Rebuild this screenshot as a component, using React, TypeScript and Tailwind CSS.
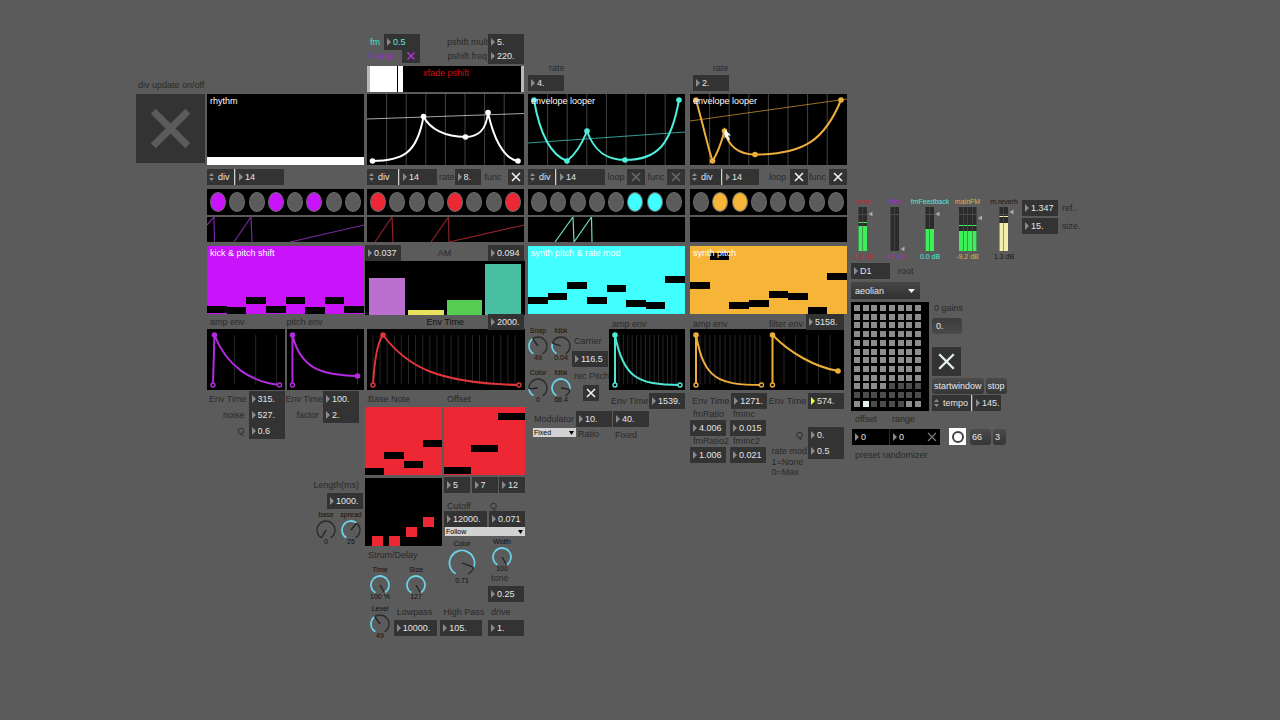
import type { ReactNode } from "react";

function Label({ children, htmlFor, className = "" }: { children: ReactNode; htmlFor?: string; className?: string }) {
  return (
    <label htmlFor={htmlFor} className={`block shrink-0 whitespace-nowrap leading-[10px] ${className}`}>
      {children}
    </label>
  );
}

type NumProps = { id: string; name: string; value: string; className?: string; text?: string; bg?: string; arrow?: string };

function Num({ id, name, value, className = "w-9", text = "text-[#e4e4e4]", bg = "bg-[#333333]", arrow = "#8a8a8a" }: NumProps) {
  return (
    <span className={`flex h-4 shrink-0 items-center gap-[2px] pl-[3px] ${bg} ${className}`}>
      <svg className="h-2 w-1 shrink-0" viewBox="0 0 4 8">
        <path d="M0 0L4 4L0 8Z" fill={arrow} />
      </svg>
      <input id={id} aria-label={name} defaultValue={value} className={`w-full min-w-0 bg-transparent outline-none ${text}`} />
    </span>
  );
}

type ToggleProps = { id: string; name: string; on?: boolean; className?: string; color?: string; bg?: string; stroke?: number };

function Toggle({ id, name, on = true, className = "size-4", color = "#f0f0f0", bg = "bg-[#333333]", stroke = 1.6 }: ToggleProps) {
  return (
    <span className={`grid shrink-0 ${bg} ${className}`}>
      <input id={id} type="checkbox" aria-label={name} defaultChecked={on} className="col-start-1 row-start-1 size-full appearance-none" />
      <svg className="pointer-events-none col-start-1 row-start-1 size-full" viewBox="0 0 16 16">
        <path d="M4 4L12 12M12 4L4 12" stroke={color} strokeWidth={stroke} />
      </svg>
    </span>
  );
}

function Attr({ id, name = "div", value, width = "w-[27px]", numWidth = "w-12" }: { id: string; name?: string; value: string; width?: string; numWidth?: string }) {
  return (
    <div className="flex h-4 shrink-0">
      <button className={`flex items-center gap-1 bg-[#333333] pl-[2px] text-[#e4e4e4] ${width}`}>
        <svg className="h-[10px] w-[5px]" viewBox="0 0 5 10">
          <path d="M0 4L2.5 1L5 4ZM0 6L2.5 9L5 6Z" fill="#8a8a8a" />
        </svg>
        {name}
      </button>
      <span className="mr-px w-px bg-[#d0d0d0]" />
      <Num id={id} name={`${name} value`} value={value} className={numWidth} />
    </div>
  );
}

function Gates({ name, on, fill }: { name: string; on: number[]; fill: string }) {
  return (
    <div className="mt-1 flex h-[26px] items-center justify-between bg-black px-[3px]">
      {Array.from({ length: 8 }, (_, i) => (
        <input
          key={i}
          type="checkbox"
          aria-label={`${name} step ${i + 1}`}
          defaultChecked={on.includes(i)}
          className={`h-5 w-4 appearance-none rounded-[50%] border border-[#6b6b6b] bg-[#5b5b5b] ${fill}`}
        />
      ))}
    </div>
  );
}

function Phase({ d, color }: { d?: string; color?: string }) {
  return (
    <svg className="mt-[2px] block h-[25px] w-full bg-black" viewBox="0 0 157 25" preserveAspectRatio="none">
      {d && <path d={d} fill="none" stroke={color} strokeWidth="1.2" />}
    </svg>
  );
}

// `steps` holds the distance of every bar from the top of the panel
function Steps({ steps, className, title }: { steps: number[]; className: string; title?: string }) {
  return (
    <div className={`relative flex h-[68px] overflow-hidden ${className}`}>
      {steps.map((top, i) => (
        <div key={i} className="h-[7px] flex-1 bg-black" style={{ marginTop: top }} />
      ))}
      {title && <span className="absolute left-[3px] top-[2px] leading-[10px] text-white">{title}</span>}
    </div>
  );
}

type Point = [number, number];

type CurveProps = { width?: number; height?: number; d: string; color: string; dots: Point[]; rings?: Point[]; grid: number[]; line?: string; children?: ReactNode };

function Curve({ width = 157, height = 71, d, color, dots, rings = [], grid, line, children }: CurveProps) {
  const inset = height === 71 ? 0 : 6;
  return (
    <svg className={`block w-full bg-black ${height === 71 ? "h-[71px]" : "h-[61px]"}`} viewBox={`0 0 ${width} ${height}`} preserveAspectRatio="none">
      {grid.map((x) => (
        <path key={x} d={`M${x} ${inset}V${height - inset}`} stroke={inset ? "#262626" : "#444444"} />
      ))}
      {line && <path d={line} stroke={color} strokeOpacity="0.65" />}
      <path d={d} fill="none" stroke={color} strokeWidth="2" />
      {dots.map(([x, y]) => (
        <circle key={`${x}-${y}`} cx={x} cy={y} r="2.8" fill={color} />
      ))}
      {rings.map(([x, y]) => (
        <circle key={`${x}-${y}`} cx={x} cy={y} r="2" fill="black" stroke={color} strokeWidth="1.4" />
      ))}
      {children}
    </svg>
  );
}

const eighths = [19.6, 39.2, 58.8, 78.4, 98, 117.6, 137.2];
const range = (start: number, step: number, count: number) => Array.from({ length: count }, (_, i) => start + step * i);

function polar(c: number, r: number, deg: number) {
  const a = (deg * Math.PI) / 180;
  return `${c + r * Math.sin(a)} ${c - r * Math.cos(a)}`;
}

function Knob({ label, value, frac, big = false }: { label: string; value: string; frac: number; big?: boolean }) {
  const c = big ? 14 : 10;
  const r = big ? 12.5 : 9;
  const end = -150 + 300 * frac;
  return (
    <div className={`flex flex-col items-center text-[7px] text-[#111111] ${big ? "w-7" : "w-5"}`}>
      <span className="h-[9px] whitespace-nowrap leading-[8px]">{label}</span>
      <svg className={big ? "size-7" : "size-5"} viewBox={`0 0 ${c * 2} ${c * 2}`} role="img" aria-label={`${label} ${value}`}>
        <path d={`M${polar(c, r, -150)}A${r} ${r} 0 1 1 ${polar(c, r, 150)}`} fill="none" stroke="#2b2b2b" strokeWidth="1.3" />
        {frac > 0 && (
          <path d={`M${polar(c, r, -150)}A${r} ${r} 0 ${frac > 0.6 ? 1 : 0} 1 ${polar(c, r, end)}`} fill="none" stroke="#6fd3e6" strokeWidth="1.8" />
        )}
        <path d={`M${c} ${c}L${polar(c, r, end)}`} stroke="#222222" strokeWidth="1.3" />
      </svg>
      <span className={`h-2 whitespace-nowrap leading-[8px] ${big ? "" : "-mt-[2px]"}`}>{value}</span>
    </div>
  );
}

function Drop({ name, value, className }: { name: string; value: string; className: string }) {
  return (
    <span className={`grid h-[9px] shrink-0 items-center bg-[#d2d2d2] ${className}`}>
      <select aria-label={name} className="col-start-1 row-start-1 h-[9px] w-full appearance-none pl-px text-[7px] leading-[9px] text-black">
        <option>{value}</option>
      </select>
      <svg className="pointer-events-none col-start-1 row-start-1 mr-[2px] h-1 w-[5px] justify-self-end" viewBox="0 0 5 4">
        <path d="M0 0H5L2.5 4Z" fill="black" />
      </svg>
    </span>
  );
}

type MeterProps = { label: string; value: string; color: string; width: string; bars?: number; level: number; peak?: number; fader: number; fill?: string };

function Meter({ label, value, color, width, bars = 2, level, peak, fader, fill = "#3df05a" }: MeterProps) {
  const half = (bars * 9) / 4;
  return (
    <div className={`flex flex-col items-center text-[7px] ${width} ${color}`}>
      <span className="whitespace-nowrap leading-[8px]">{label}</span>
      <svg className="mt-px h-11 w-9" viewBox="0 0 36 44">
        {Array.from({ length: bars }, (_, i) => {
          const x = 18 - half + i * 4.5;
          return (
            <g key={i}>
              <rect x={x} width="4" height="44" fill="#2b2b2b" />
              <rect x={x} y="7" width="4" height="1" fill="#4c4c4c" />
              <rect x={x} y={44 - level} width="4" height={level} fill={fill} />
              {peak !== undefined && <rect x={x} y={peak} width="4" height="1" fill={fill} />}
            </g>
          );
        })}
        <path d={`M${19 + half} ${fader}L${23 + half} ${fader - 2.5}V${fader + 2.5}Z`} fill="#aaaaaa" />
      </svg>
      <span className="mt-[2px] whitespace-nowrap leading-[8px]">{value}</span>
    </div>
  );
}

function Rhythm() {
  return (
    <div className="min-w-0 grow-[157] basis-0 ml-[2px] pt-[94px]">
      <div className="flex h-[71px] flex-col justify-between bg-black">
        <span className="pl-[3px] pt-[2px] leading-[10px] text-white">rhythm</span>
        <div className="h-2 bg-white" />
      </div>
      <div className="mt-1">
        <Attr id="rhythm-div" value="14" />
      </div>
      <Gates name="rhythm" on={[0, 3, 5]} fill="checked:bg-[#c913fb]" />
      <Phase color="#75299b" d="M0 8L7 0L7.5 25M27 25L44 0L45 25M83 25L157 8" />
      <Steps className="mt-1 bg-[#c913fb]" title="kick & pitch shift" steps={[60, 61, 51, 60, 51, 61, 51, 60]} />
      <div className="grid h-[15px] grid-cols-2 items-center gap-[2px]">
        <Label className="pl-[3px]">amp env</Label>
        <Label>pitch env</Label>
      </div>
      <div className="grid grid-cols-2 gap-[2px]">
        <Curve width={78} height={61} color="#b42be0" grid={[27.5, 49, 70]} dots={[[7.5, 6]]} rings={[[6, 56], [73, 56]]} d="M6 56L7.5 6C20 38 45 53 73 56" />
        <Curve width={78} height={61} color="#b42be0" grid={[71]} dots={[[5.5, 6], [71, 47]]} rings={[[5.5, 56]]} d="M5.5 56V6C14 42 38 46 71 47" />
      </div>
      <div className="mt-px flex gap-px">
        <div className="flex flex-col items-end">
          <div className="flex items-center gap-[2px] pl-[2px]">
            <Label htmlFor="kick-time">Env Time</Label>
            <Num id="kick-time" name="kick env time" value="315." />
          </div>
          <div className="flex items-center gap-1">
            <Label htmlFor="noise">noise</Label>
            <Num id="noise" name="noise" value="527." />
          </div>
          <div className="flex items-center gap-1">
            <Label htmlFor="kick-q">Q</Label>
            <Num id="kick-q" name="kick Q" value="0.6" />
          </div>
        </div>
        <div className="flex flex-col items-end">
          <div className="flex items-center">
            <Label htmlFor="pitch-time">Env Time</Label>
            <Num id="pitch-time" name="pitch env time" value="100." />
          </div>
          <div className="flex items-center gap-1">
            <Label htmlFor="factor">factor</Label>
            <Num id="factor" name="factor" value="2." />
          </div>
        </div>
      </div>
      <div className="mt-[41px] flex flex-col items-end pr-px">
        <Label htmlFor="length" className="pr-1">Length(ms)</Label>
        <div className="mt-[3px]">
          <Num id="length" name="length in ms" value="1000." />
        </div>
        <div className="mt-[2px] flex gap-[5px] pr-[2px]">
          <Knob label="base" value="0" frac={0} />
          <Knob label="spread" value="25" frac={0.63} />
        </div>
      </div>
    </div>
  );
}

function Strum() {
  return (
    <div className="min-w-0 grow-[160] basis-0 ml-px pt-[34px]">
      <div className="pl-[2px] pr-px">
        <div className="flex justify-between">
          <div className="flex w-[53px] flex-col pl-[3px]">
            <div className="flex h-[15px] items-center justify-between">
              <Label htmlFor="fm" className="text-[#45e0d0]">fm</Label>
              <Num id="fm" name="fm" value="0.5" text="text-[#5fe3d8]" />
            </div>
            <div className="flex h-[14px] items-center justify-between">
              <Label htmlFor="k-amp" className="text-[#9a2fc0]">k amp</Label>
              <Toggle id="k-amp" name="k amp" color="#c02fe8" className="h-[14px] w-[18px]" />
            </div>
          </div>
          <div className="flex flex-col items-end">
            <div className="flex h-[15px] items-center">
              <Label htmlFor="mult">pshift mult</Label>
              <Num id="mult" name="pshift mult" value="5." />
            </div>
            <div className="flex h-[14px] items-center gap-px">
              <Label htmlFor="freq">pshift freq</Label>
              <Num id="freq" name="pshift freq" value="220." />
            </div>
          </div>
        </div>
        <div className="mt-[3px] flex h-[26px] bg-black">
          <div className="w-[3px] bg-[#b9b9b9]" />
          <div className="w-[27px] bg-white" />
          <div className="ml-px w-[5px] bg-white" />
          <span className="ml-5 mt-[2px] flex-1 leading-[10px] text-[#d80c0c]">xfade pshift</span>
          <div className="w-[3px] bg-[#b9b9b9]" />
        </div>
        <div className="mt-[2px]">
          <Curve
            color="#ffffff"
            grid={eighths}
            line="M0 25L157 19.5"
            dots={[[5.5, 67], [56.5, 22.5], [98.5, 43], [121, 18.5], [151, 67]]}
            d="M5.5 67C35 67 50 60 56.5 22.5C63 35 78 43 98.5 43C110 43 119 38 121 18.5C126 42 136 65 151 67"
          />
        </div>
        <div className="mt-1 flex items-center">
          <Attr id="am-div" value="14" width="w-[31px]" numWidth="w-[37px]" />
          <Label htmlFor="am-rate" className="ml-[2px]">rate</Label>
          <Num id="am-rate" name="rate" value="8." className="w-[26px]" />
          <Label htmlFor="am-func" className="ml-[4px]">func</Label>
          <span className="ml-auto">
            <Toggle id="am-func" name="func" />
          </span>
        </div>
        <Gates name="am" on={[0, 4, 7]} fill="checked:bg-[#ed2734]" />
        <Phase color="#8e2226" d="M8 25L25 0L26 25M64 25L81.5 0L82 25L157 8" />
      </div>
      <div className="mt-[3px] flex items-center justify-between pr-px">
        <Num id="am-low" name="AM low" value="0.037" />
        <Label htmlFor="am-high">AM</Label>
        <Num id="am-high" name="AM high" value="0.094" />
      </div>
      <div className="grid h-[54px] grid-cols-4 items-end gap-[3px] bg-black px-1">
        <div className="h-[37px] bg-[#bb70d0]" />
        <div className="h-[5px] bg-[#e6e45c]" />
        <div className="h-[15px] bg-[#56cc50]" />
        <div className="h-[51px] bg-[#48bfa2]" />
      </div>
      <div className="flex h-[14px] items-center justify-end gap-6 pr-px">
        <Label htmlFor="am-time" className="text-[#111111]">Env Time</Label>
        <Num id="am-time" name="env time" value="2000." />
      </div>
      <div className="pl-[2px]">
        <Curve width={158} height={61} color="#e0353a" grid={range(6, 7.1, 21)} dots={[[16, 6]]} rings={[[6, 56], [152, 56]]} d="M6 56C7 38 10 14 16 6C40 38 70 54 152 56" />
      </div>
      <div className="flex">
        <div className="grow-[77] basis-0">
          <div className="flex h-[17px] items-center">
            <Label className="pl-[3px]">Base Note</Label>
          </div>
          <Steps className="bg-[#ed2734]" steps={[61, 45, 54, 33]} />
          <div className="mt-[3px] flex h-[68px] gap-[6px] bg-black pl-[7px]">
            {[58, 58, 49, 39].map((top, i) => (
              <div key={i} className="h-[10px] w-[11px] bg-[#ed2734]" style={{ marginTop: top }} />
            ))}
          </div>
          <div className="flex h-[18px] items-center pl-[3px]">
            <Label>Strum/Delay</Label>
          </div>
          <div className="mt-[2px] flex gap-4 pl-[5px]">
            <Knob label="Time" value="100 %" frac={1} />
            <Knob label="Size" value="127" frac={1} />
          </div>
        </div>
        <div className="ml-[2px] grow-[81] basis-0">
          <div className="flex h-[17px] items-center">
            <Label className="pl-[3px]">Offset</Label>
          </div>
          <Steps className="bg-[#ed2734]" steps={[60, 38, 6]} />
          <div className="mt-[2px] flex justify-between">
            <Num id="off-1" name="offset 1" value="5" className="w-[26px]" />
            <Num id="off-2" name="offset 2" value="7" className="w-[26px]" />
            <Num id="off-3" name="offset 3" value="12" className="w-[26px]" />
          </div>
          <div className="mt-2 flex pl-[3px]">
            <Label htmlFor="cutoff" className="w-[43px]">Cutoff</Label>
            <Label htmlFor="cut-q">Q</Label>
          </div>
          <div className="flex justify-between">
            <Num id="cutoff" name="cutoff" value="12000." className="w-[43px]" />
            <Num id="cut-q" name="Q" value="0.071" />
          </div>
          <Drop name="follow mode" value="Follow" className="ml-px" />
          <div className="mt-[2px] flex items-start gap-4 pl-1">
            <div className="pt-[2px]">
              <Knob label="Color" value="0.71" frac={0.87} big />
            </div>
            <Knob label="Width" value="100" frac={1} />
          </div>
        </div>
      </div>
      <div className="-mt-7 flex justify-between pr-px">
        <div className="pl-[5px] pt-8">
          <Knob label="Level" value="49" frac={0.38} />
        </div>
        <div className="pt-[34px]">
          <Label htmlFor="lowpass" className="pb-[3px] pl-[3px]">Lowpass</Label>
          <Num id="lowpass" name="lowpass" value="10000." className="w-[43px]" />
        </div>
        <div className="pt-[34px]">
          <Label htmlFor="highpass" className="pb-[3px] pl-[3px]">High Pass</Label>
          <Num id="highpass" name="high pass" value="105." className="w-[42px]" />
        </div>
        <div>
          <Label htmlFor="tone" className="pb-[3px] pl-[3px]">tone</Label>
          <Num id="tone" name="tone" value="0.25" />
          <Label htmlFor="drive" className="pb-[3px] pl-[3px] pt-[5px]">drive</Label>
          <Num id="drive" name="drive" value="1." />
        </div>
      </div>
    </div>
  );
}

function SynthOne() {
  return (
    <div className="min-w-0 grow-[157] basis-0 ml-[3px] pt-[60px]">
      <div className="flex h-[15px] items-center pl-[21px]">
        <Label htmlFor="rate-1">rate</Label>
      </div>
      <Num id="rate-1" name="rate" value="4." />
      <div className="relative mt-[3px]">
        <Curve
          color="#4feedd"
          grid={eighths}
          line="M0 49L157 38"
          dots={[[6, 6], [39, 67], [59, 37], [97, 66], [151, 6]]}
          d="M6 6C11 35 20 60 39 67C48 60 54 50 59 37C66 57 78 66 97 66C130 66 143 50 151 6"
        />
        <span className="absolute left-[3px] top-[2px] leading-[10px] text-white">envelope looper</span>
      </div>
      <div className="mt-1 flex items-center justify-between">
        <Attr id="s1-div" value="14" />
        <Label htmlFor="s1-loop">loop</Label>
        <Toggle id="s1-loop" name="loop" on={false} color="#6a6a6a" className="h-4 w-[18px]" />
        <Label htmlFor="s1-func">func</Label>
        <Toggle id="s1-func" name="func" on={false} color="#6a6a6a" className="h-4 w-[18px]" />
      </div>
      <Gates name="synth one" on={[5, 6]} fill="checked:bg-[#41ffff]" />
      <Phase color="#6fdcb4" d="M27 25L45 0L46 25L63.5 0L64 25" />
      <Steps className="mt-1 bg-[#41ffff]" title="synth pitch & rate mod" steps={[51, 47, 36, 51, 39, 54, 56, 30]} />
      <div className="flex">
        <div className="grid grid-cols-2 content-start gap-x-[3px] gap-y-[7px] pt-[13px]">
          <Knob label="Snap" value="49" frac={0.38} />
          <Knob label="fdbk" value="0.04" frac={0.26} />
          <Knob label="Color" value="0" frac={0.18} />
          <Knob label="fdbk" value="68.4" frac={0.83} />
        </div>
        <div className="ml-px flex flex-col items-start pt-[22px]">
          <Label htmlFor="carrier" className="pb-[5px] pl-[2px]">Carrier</Label>
          <Num id="carrier" name="carrier" value="116.5" />
          <Label htmlFor="rec" className="pb-1 pl-[2px] pt-1">rec Pitch</Label>
          <span className="self-center">
            <Toggle id="rec" name="rec pitch" />
          </span>
        </div>
        <div className="min-w-0 flex-1">
          <div className="flex h-[15px] items-end pl-[3px]">
            <Label>amp env</Label>
          </div>
          <Curve width={76} height={61} color="#4fe6d4" grid={range(10, 4.4, 14)} dots={[[6, 6]]} rings={[[6, 56], [71, 56]]} d="M6 56V6C14 48 28 56 71 56" />
          <div className="mt-[3px] flex items-center justify-between pl-[2px]">
            <Label htmlFor="s1-time">Env Time</Label>
            <Num id="s1-time" name="env time" value="1539." />
          </div>
        </div>
      </div>
      <div className="mt-[2px] flex items-center gap-px pl-[6px]">
        <Label htmlFor="mod-ratio" className="w-[41px]">Modulator</Label>
        <Num id="mod-ratio" name="modulator ratio" value="10." />
        <Num id="mod-fixed" name="modulator fixed" value="40." />
      </div>
      <div className="mt-px flex items-start pl-[5px]">
        <Drop name="modulator mode" value="Fixed" className="w-[43px]" />
        <Label htmlFor="mod-ratio" className="w-[37px] pl-[2px] pt-px">Ratio</Label>
        <Label htmlFor="mod-fixed" className="pl-[2px] pt-[2px]">Fixed</Label>
      </div>
    </div>
  );
}

function SynthTwo() {
  return (
    <div className="min-w-0 grow-[157] basis-0 ml-[5px] pt-[60px]">
      <div className="flex h-[15px] items-center pl-[23px]">
        <Label htmlFor="rate-2">rate</Label>
      </div>
      <div className="pl-[3px]">
        <Num id="rate-2" name="rate" value="2." />
      </div>
      <div className="relative mt-[3px]">
        <Curve
          color="#edae3c"
          grid={eighths}
          line="M0 27L157 5"
          dots={[[6, 6], [22.5, 67], [34.5, 37], [65, 60.5], [151, 6]]}
          d="M6 6C13 30 17 50 22.5 67C27 60 31 50 34.5 37C39 54 50 60.5 65 60.5C115 60.5 135 45 151 6"
        >
          <path d="M34.5 35L41 41.5H38L40 45.5L38 46.5L36 42.5L34.5 45Z" fill="white" />
        </Curve>
        <span className="absolute left-[3px] top-[2px] leading-[10px] text-white">envelope looper</span>
      </div>
      <div className="mt-1 flex items-center">
        <Attr id="s2-div" value="14" width="w-[31px]" numWidth="w-9" />
        <Label htmlFor="s2-loop" className="ml-auto">loop</Label>
        <span className="ml-[4px]">
          <Toggle id="s2-loop" name="loop" className="h-4 w-[18px]" />
        </span>
        <Label htmlFor="s2-func" className="ml-px">func</Label>
        <span className="ml-[3px]">
          <Toggle id="s2-func" name="func" className="h-4 w-[18px]" />
        </span>
      </div>
      <Gates name="synth two" on={[1, 2]} fill="checked:bg-[#f7b538]" />
      <Phase />
      <Steps className="mt-1 bg-[#f7b538]" title="synth pitch" steps={[36, 7, 56, 54, 45, 47, 61, 27]} />
      <div className="pr-[3px]">
        <div className="flex h-[15px] items-center pl-[3px]">
          <Label className="w-[76px] pt-1">amp env</Label>
          <Label htmlFor="filter" className="pt-1">filter env</Label>
          <span className="ml-auto">
            <Num id="filter" name="filter env" value="5158." className="w-[38px]" />
          </span>
        </div>
        <Curve
          width={154}
          height={61}
          color="#edae3c"
          grid={[...range(10, 5, 13), ...range(94, 11.5, 5)]}
          dots={[[6, 6], [82.5, 6], [148, 42]]}
          rings={[[6, 56], [71.5, 56], [82.5, 56]]}
          d="M6 56V6C14 50 28 56 71.5 56M82.5 56V6C100 24 125 38 148 42"
        />
        <div className="mt-[3px] flex items-center justify-between pl-[2px]">
          <Label htmlFor="s2-time">Env Time</Label>
          <Num id="s2-time" name="amp env time" value="1271." />
          <Label htmlFor="s2-ftime">Env Time</Label>
          <Num id="s2-ftime" name="filter env time" value="574." arrow="#e8ff3c" />
        </div>
        <div className="flex justify-between">
          <div className="grid grid-cols-2 content-start gap-x-px">
            <Label htmlFor="ratio-1" className="pb-px pl-[3px]">fmRatio</Label>
            <Label htmlFor="inc-1" className="pb-px pl-[3px]">fmInc</Label>
            <Num id="ratio-1" name="fmRatio" value="4.006" />
            <Num id="inc-1" name="fmInc" value="0.015" />
            <Label htmlFor="ratio-2" className="pb-px pl-[3px]">fmRatio2</Label>
            <Label htmlFor="inc-2" className="pb-px pl-[3px]">fmInc2</Label>
            <Num id="ratio-2" name="fmRatio2" value="1.006" />
            <Num id="inc-2" name="fmInc2" value="0.021" />
          </div>
          <div className="pt-[18px]">
            <div className="flex items-center justify-end gap-[5px]">
              <Label htmlFor="s2-q">Q</Label>
              <Num id="s2-q" name="Q" value="0." />
            </div>
            <div className="flex items-center justify-end gap-px">
              <Label htmlFor="rate-mod">rate mod</Label>
              <Num id="rate-mod" name="rate mod" value="0.5" />
            </div>
            <p className="-mt-[2px] leading-[10px]">
              1=None
              <br />
              0=Max
            </p>
          </div>
        </div>
      </div>
    </div>
  );
}

function cellColor(i: number) {
  if (i === 89) return "bg-[#e2f2ee]";
  const dim = (i >= 76 && i < 88) || (i > 89 && i < 94);
  return dim ? "bg-[#4c4c4c]" : "bg-[#8c8c8c]";
}

const pill = "flex h-4 items-center rounded-[3px] bg-linear-to-b from-[#4a4a4a] to-[#363636] text-[#e8e8e8]";

function Master() {
  return (
    <div className="min-w-0 grow-[234] basis-0 ml-1 pt-[198px]">
      <div className="flex">
        <div className="-ml-1 flex h-[65px]">
          <Meter width="w-8" label="vkick" value="-1.2 dB" color="text-[#c22a32]" level={25} peak={15} fader={7} />
          <Meter width="w-8" label="filter" value="-inf dB" color="text-[#9d2fc4]" level={0} fader={42} />
          <Meter width="w-[38px]" label="fmFeedback" value="0.0 dB" color="text-[#50e8dc]" level={22} fader={7} />
          <Meter width="w-[37px]" label="mainFM" value="-9.2 dB" color="text-[#e2ad48]" bars={4} level={20} peak={18} fader={11} />
          <Meter width="w-9" label="m.reverb" value="1.3 dB" color="text-[#161616]" level={28} peak={9} fader={5} fill="#f4efac" />
        </div>
        <div className="flex flex-col gap-[2px] pt-[2px]">
          <div className="flex items-center gap-1">
            <Num id="ref" name="reverb ref" value="1.347" />
            <Label htmlFor="ref">ref..</Label>
          </div>
          <div className="flex items-center gap-1">
            <Num id="size" name="reverb size" value="15." />
            <Label htmlFor="size">size.</Label>
          </div>
        </div>
      </div>
      <div className="flex items-center gap-2">
        <Num id="root-note" name="root note" value="D1" className="w-[39px]" />
        <Label htmlFor="root-note">root</Label>
      </div>
      <span className="mt-[3px] grid h-[17px] w-[69px] items-center bg-linear-to-b from-[#474747] to-[#303030]">
        <select aria-label="scale" className="col-start-1 row-start-1 h-4 w-full appearance-none pl-1 text-[#e8e8e8]">
          <option>aeolian</option>
        </select>
        <svg className="pointer-events-none col-start-1 row-start-1 mr-[5px] h-1 w-[7px] justify-self-end" viewBox="0 0 7 4">
          <path d="M0 0H7L3.5 4Z" fill="#f0f0f0" />
        </svg>
      </span>
      <div className="mt-[3px] flex gap-[3px]">
        <div className="grid h-[109px] w-[78px] shrink-0 grid-cols-[repeat(8,6px)] content-between justify-between bg-black pb-1 pl-[3px] pr-2 pt-[3px]">
          {Array.from({ length: 96 }, (_, i) => (
            <button key={i} aria-label={`preset ${i + 1}`} className={`size-[6px] ${cellColor(i)}`} />
          ))}
        </div>
        <div className="flex flex-col items-start">
          <Label htmlFor="gains" className="pl-[2px] pt-px">0 gains</Label>
          <input id="gains" defaultValue="0." className="mt-[5px] h-4 w-[30px] rounded-[3px] bg-linear-to-b from-[#3c3c3c] to-[#4a4a4a] pl-1 text-[#e8e8e8]" />
          <div className="mt-[13px]">
            <Toggle id="dsp" name="audio on" className="size-[29px]" stroke={1.3} color="#e2f2ee" />
          </div>
          <div className="mt-[2px] flex gap-[2px]">
            <button className={`${pill} px-[2px]`}>startwindow</button>
            <button className={`${pill} px-[2px]`}>stop</button>
          </div>
          <div className="mt-px">
            <Attr id="tempo" name="tempo" value="145." width="w-[39px]" numWidth="w-7" />
          </div>
        </div>
      </div>
      <div className="mt-[3px] flex pl-1">
        <Label htmlFor="offset" className="w-[37px]">offset</Label>
        <Label htmlFor="range">range</Label>
      </div>
      <div className="mt-1 flex items-center pl-px">
        <div className="flex gap-px bg-[#2b2b2b]">
          <Num id="offset" name="offset" value="0" bg="bg-black" className="w-[37px]" />
          <Num id="range" name="range" value="0" bg="bg-black" className="w-[34px]" />
        </div>
        <Toggle id="rand" name="randomize" on={false} color="#777777" bg="bg-black" stroke={1.3} />
        <button aria-label="trigger" className="ml-[9px] flex size-[17px] items-center justify-center bg-white">
          <span className="size-[12px] rounded-full border-2 border-[#444444]" />
        </button>
        <button className={`${pill} ml-1 w-[21px] pl-[2px]`}>66</button>
        <button className={`${pill} ml-[2px] w-[13px] pl-[2px]`}>3</button>
      </div>
      <Label className="pl-1 pt-[5px]">preset randomizer</Label>
    </div>
  );
}

export default function App() {
  return (
    <main className="flex min-h-screen items-start bg-[#5b5b5b] pl-[136px] pr-[195px] font-['Liberation_Sans',Arial,sans-serif] text-[9px] leading-[10px] text-[#2a2a2a]">
      <div className="min-w-0 grow-[69] basis-0 pt-[80px]">
        <Label htmlFor="update" className="pl-[2px]">div update on/off</Label>
        <div className="mt-1">
          <Toggle id="update" name="div update" on={false} className="aspect-square w-full" color="#5b5b5b" />
        </div>
      </div>
      <Rhythm />
      <Strum />
      <SynthOne />
      <SynthTwo />
      <Master />
    </main>
  );
}
